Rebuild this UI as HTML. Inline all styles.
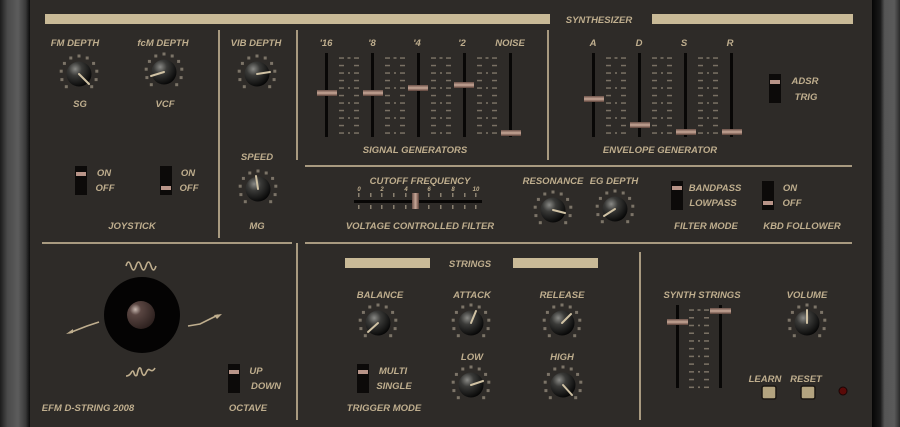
<!DOCTYPE html>
<html><head><meta charset="utf-8"><style>
html,body{margin:0;padding:0;background:#2e2b28;}
svg{display:block}
text{font-family:"Liberation Sans",sans-serif;font-style:italic;font-weight:bold;font-size:9.5px;fill:#bfae8e;text-anchor:middle}
</style></head><body>
<svg width="900" height="427" viewBox="0 0 900 427" xmlns="http://www.w3.org/2000/svg">
<defs>
<linearGradient id="side" x1="0" x2="1" y1="0" y2="0">
<stop offset="0" stop-color="#1c1c1c"/><stop offset="0.25" stop-color="#4a4a4a"/><stop offset="0.6" stop-color="#5c5c5c"/><stop offset="0.85" stop-color="#3a3a3a"/><stop offset="1" stop-color="#0a0a0a"/>
</linearGradient>
<linearGradient id="side2" x1="0" x2="1" y1="0" y2="0">
<stop offset="0" stop-color="#050505"/><stop offset="0.3" stop-color="#1a1a1a"/><stop offset="0.45" stop-color="#555"/><stop offset="0.8" stop-color="#5a5a5a"/><stop offset="1" stop-color="#2a2a2a"/>
</linearGradient>
<radialGradient id="kb" cx="0.35" cy="0.3" r="0.75">
<stop offset="0" stop-color="#8a8a86"/><stop offset="0.35" stop-color="#3a3a38"/><stop offset="1" stop-color="#050505"/>
</radialGradient>
<radialGradient id="joy" cx="0.3" cy="0.3" r="0.8">
<stop offset="0" stop-color="#c8b8b0"/><stop offset="0.25" stop-color="#5a4642"/><stop offset="1" stop-color="#2a1e1c"/>
</radialGradient>
<linearGradient id="cap" x1="0" x2="0" y1="0" y2="1">
<stop offset="0" stop-color="#6a5048"/><stop offset="0.5" stop-color="#c8a898"/><stop offset="1" stop-color="#5a4038"/>
</linearGradient>
<linearGradient id="caph" x1="0" x2="1" y1="0" y2="0">
<stop offset="0" stop-color="#6a5048"/><stop offset="0.5" stop-color="#c8a898"/><stop offset="1" stop-color="#5a4038"/>
</linearGradient>
<g id="kscale" fill="#7c7468">
<rect x="-14.2" y="11.2" width="3" height="3"/><rect x="-18.6" y="4.1" width="3" height="3"/><rect x="-19.3" y="-4.3" width="3" height="3"/><rect x="-16.1" y="-12.1" width="3" height="3"/><rect x="-9.7" y="-17.5" width="3" height="3"/><rect x="-1.5" y="-19.5" width="3" height="3"/><rect x="6.7" y="-17.5" width="3" height="3"/><rect x="13.1" y="-12.1" width="3" height="3"/><rect x="16.3" y="-4.3" width="3" height="3"/><rect x="15.6" y="4.1" width="3" height="3"/><rect x="11.2" y="11.2" width="3" height="3"/>
</g>
<g id="knob"><use href="#kscale"/><circle r="12.5" fill="url(#kb)"/></g>
<g id="vscale" fill="#7a7164">
<rect x="-10" y="-0.7" width="5" height="1.5"/><rect x="5" y="-0.7" width="5" height="1.5"/>
<rect x="-10" y="6.8" width="5" height="1.5"/><rect x="5" y="6.8" width="5" height="1.5"/>
<rect x="-10" y="14.3" width="5" height="1.5"/><rect x="5" y="14.3" width="5" height="1.5"/>
<rect x="-10" y="21.8" width="5" height="1.5"/><rect x="5" y="21.8" width="5" height="1.5"/>
<rect x="-10" y="29.3" width="5" height="1.5"/><rect x="5" y="29.3" width="5" height="1.5"/>
<rect x="-10" y="36.8" width="5" height="1.5"/><rect x="5" y="36.8" width="5" height="1.5"/>
<rect x="-10" y="44.3" width="5" height="1.5"/><rect x="5" y="44.3" width="5" height="1.5"/>
<rect x="-10" y="51.8" width="5" height="1.5"/><rect x="5" y="51.8" width="5" height="1.5"/>
<rect x="-10" y="59.3" width="5" height="1.5"/><rect x="5" y="59.3" width="5" height="1.5"/>
<rect x="-10" y="66.8" width="5" height="1.5"/><rect x="5" y="66.8" width="5" height="1.5"/>
<rect x="-10" y="74.3" width="5" height="1.5"/><rect x="5" y="74.3" width="5" height="1.5"/>
<rect x="-1.5" y="-0.8" width="3" height="1.6"/><rect x="-1" y="14.2" width="2" height="1.6"/><rect x="-1" y="29.2" width="2" height="1.6"/><rect x="-1" y="44.2" width="2" height="1.6"/><rect x="-1" y="59.2" width="2" height="1.6"/><rect x="-1" y="74.2" width="2" height="1.6"/>
</g>
</defs>

<rect width="900" height="427" fill="#2e2b28"/>
<rect x="0" y="0" width="30" height="427" fill="url(#side)"/>
<rect x="872" y="0" width="28" height="427" fill="url(#side2)"/>

<g fill="#c9ba97">
<rect x="45" y="14" width="505" height="10"/>
<rect x="652" y="14" width="201" height="10"/>
<rect x="345" y="258" width="85" height="10"/>
<rect x="513" y="258" width="85" height="10"/>
</g>
<text x="599" y="23">SYNTHESIZER</text>
<text x="470" y="267">STRINGS</text>

<g stroke="#a89a80" stroke-width="2">
<line x1="219" y1="30" x2="219" y2="238"/>
<line x1="297" y1="30" x2="297" y2="160"/>
<line x1="548" y1="30" x2="548" y2="160"/>
<line x1="305" y1="166" x2="852" y2="166"/>
<line x1="305" y1="243" x2="852" y2="243"/>
<line x1="42" y1="243" x2="292" y2="243"/>
<line x1="297" y1="243" x2="297" y2="420"/>
<line x1="640" y1="252" x2="640" y2="420"/>
</g>

<!-- switches -->
<g fill="#0c0a09">
<rect x="75" y="166" width="12" height="29"/>
<rect x="160" y="166" width="12" height="29"/>
<rect x="769" y="74" width="12" height="29"/>
<rect x="671" y="181" width="12" height="29"/>
<rect x="762" y="181" width="12" height="29"/>
<rect x="228" y="364" width="12" height="29"/>
<rect x="357" y="364" width="12" height="29"/>
</g>
<g fill="#b89488">
<rect x="76" y="172" width="10" height="4"/>
<rect x="161" y="186" width="10" height="4"/>
<rect x="770" y="80" width="10" height="4"/>
<rect x="672" y="186" width="10" height="4"/>
<rect x="763" y="201" width="10" height="4"/>
<rect x="229" y="370" width="10" height="4"/>
<rect x="358" y="370" width="10" height="4"/>
</g>

<!-- left top -->
<text x="75" y="46">FM DEPTH</text>
<text x="163" y="46">fcM DEPTH</text>
<text x="256" y="46">VIB DEPTH</text>
<text x="80" y="107">SG</text>
<text x="165" y="107">VCF</text>
<text x="257" y="160">SPEED</text>
<text x="257" y="229">MG</text>
<text x="132" y="229">JOYSTICK</text>
<g stroke="#d0c2a4" stroke-width="2" stroke-linecap="round">
<g transform="translate(79,74)"><use href="#knob" stroke="none"/><line x1="0" y1="0" x2="10" y2="10"/></g>
<g transform="translate(164,72)"><use href="#knob" stroke="none"/><line x1="0" y1="0" x2="-13" y2="4"/></g>
<g transform="translate(257,74)"><use href="#knob" stroke="none"/><line x1="0" y1="0" x2="13" y2="-2"/></g>
<g transform="translate(258,189)"><use href="#knob" stroke="none"/><line x1="0" y1="0" x2="-2" y2="-13"/></g>
</g>
<text x="104" y="176">ON</text><text x="105" y="191">OFF</text>
<text x="188" y="176">ON</text><text x="189" y="191">OFF</text>

<!-- signal generators -->
<text x="326" y="46">'16</text><text x="372" y="46">'8</text><text x="417" y="46">'4</text><text x="462" y="46">'2</text><text x="510" y="46">NOISE</text>
<g fill="#080706">
<rect x="325" y="53" width="3" height="84"/><rect x="371" y="53" width="3" height="84"/><rect x="417" y="53" width="3" height="84"/><rect x="463" y="53" width="3" height="84"/><rect x="509" y="53" width="3" height="84"/>
<rect x="592" y="53" width="3" height="84"/><rect x="638" y="53" width="3" height="84"/><rect x="684" y="53" width="3" height="84"/><rect x="730" y="53" width="3" height="84"/>
<rect x="676" y="305" width="3" height="83"/><rect x="719" y="305" width="3" height="83"/>
</g>
<use href="#vscale" x="349" y="58"/><use href="#vscale" x="395" y="58"/><use href="#vscale" x="441" y="58"/><use href="#vscale" x="487" y="58"/>
<use href="#vscale" x="616" y="58"/><use href="#vscale" x="662" y="58"/><use href="#vscale" x="708" y="58"/>
<g transform="translate(699,310) scale(1,1.03)"><use href="#vscale"/></g>
<g fill="url(#cap)">
<rect x="317" y="90" width="20" height="6"/><rect x="363" y="90" width="20" height="6"/><rect x="408" y="85" width="20" height="6"/><rect x="454" y="82" width="20" height="6"/><rect x="501" y="130" width="20" height="6"/>
<rect x="584" y="96" width="20" height="6"/><rect x="630" y="122" width="20" height="6"/><rect x="676" y="129" width="20" height="6"/><rect x="722" y="129" width="20" height="6"/>
<rect x="667" y="319" width="21" height="6"/><rect x="710" y="308" width="21" height="6"/>
</g>
<text x="415" y="153">SIGNAL GENERATORS</text>

<!-- envelope -->
<text x="593" y="46">A</text><text x="639" y="46">D</text><text x="684" y="46">S</text><text x="730" y="46">R</text>
<text x="660" y="153">ENVELOPE GENERATOR</text>
<text x="805" y="84">ADSR</text><text x="806" y="100">TRIG</text>

<!-- VCF -->
<text x="420" y="184">CUTOFF FREQUENCY</text>
<text x="359" y="191" style="font-size:6px">0</text><text x="382" y="191" style="font-size:6px">2</text><text x="406" y="191" style="font-size:6px">4</text><text x="429" y="191" style="font-size:6px">6</text><text x="453" y="191" style="font-size:6px">8</text><text x="476" y="191" style="font-size:6px">10</text>
<g fill="#8a8070">
<rect x="358" y="193" width="1.5" height="4"/><rect x="370" y="193" width="1.5" height="4"/><rect x="381" y="193" width="1.5" height="4"/><rect x="393" y="193" width="1.5" height="4"/><rect x="405" y="193" width="1.5" height="4"/><rect x="428" y="193" width="1.5" height="4"/><rect x="440" y="193" width="1.5" height="4"/><rect x="452" y="193" width="1.5" height="4"/><rect x="464" y="193" width="1.5" height="4"/><rect x="475" y="193" width="1.5" height="4"/>
<rect x="358" y="205" width="1.5" height="4"/><rect x="370" y="205" width="1.5" height="4"/><rect x="381" y="205" width="1.5" height="4"/><rect x="393" y="205" width="1.5" height="4"/><rect x="405" y="205" width="1.5" height="4"/><rect x="428" y="205" width="1.5" height="4"/><rect x="440" y="205" width="1.5" height="4"/><rect x="452" y="205" width="1.5" height="4"/><rect x="464" y="205" width="1.5" height="4"/><rect x="475" y="205" width="1.5" height="4"/>
</g>
<rect x="354" y="200" width="128" height="3" fill="#080706"/>
<rect x="412" y="193" width="7" height="16" fill="url(#caph)"/>
<text x="420" y="229">VOLTAGE CONTROLLED FILTER</text>
<text x="553" y="184">RESONANCE</text><text x="614" y="184">EG DEPTH</text>
<g stroke="#d0c2a4" stroke-width="2" stroke-linecap="round">
<g transform="translate(553,210)"><use href="#knob" stroke="none"/><line x1="0" y1="0" x2="12" y2="3"/></g>
<g transform="translate(615,209)"><use href="#knob" stroke="none"/><line x1="0" y1="0" x2="-11" y2="7"/></g>
</g>
<text x="715" y="191">BANDPASS</text><text x="713" y="206">LOWPASS</text>
<text x="706" y="229">FILTER MODE</text>
<text x="790" y="191">ON</text><text x="792" y="206">OFF</text>
<text x="802" y="229">KBD FOLLOWER</text>

<!-- joystick -->
<circle cx="142" cy="315" r="38" fill="#040303"/>
<circle cx="141" cy="315" r="14" fill="url(#joy)"/>
<g fill="none" stroke="#bfae8e" stroke-width="1.6">
<path d="M126 266 q2.5 -8 5 0 q2.5 8 5 0 q2.5 -8 5 0 q2.5 8 5 0 q2.5 -8 5 0 q2.5 8 5 0"/>
<path d="M126 376 q3 0 5 -3 q2 -4 3 0 q1 4 3 2 q2 -10 4 -6 q2 10 5 4 q2 -5 4 -3 q3 2 5 -2"/>
<path d="M99 322 l-12 4 l-18 7"/><path d="M188 326 l12 -2 l18 -9"/>
</g>
<path d="M66 334 l7 -5 l0 4 z" fill="#bfae8e"/><path d="M222 314 l-8 1 l3 4 z" fill="#bfae8e"/>
<text x="256" y="374">UP</text><text x="266" y="389">DOWN</text>
<text x="248" y="411">OCTAVE</text>
<text x="88" y="411">EFM D-STRING 2008</text>

<!-- strings -->
<text x="380" y="298">BALANCE</text><text x="472" y="298">ATTACK</text><text x="562" y="298">RELEASE</text>
<text x="472" y="360">LOW</text><text x="562" y="360">HIGH</text>
<g stroke="#d0c2a4" stroke-width="2" stroke-linecap="round">
<g transform="translate(378,323)"><use href="#knob" stroke="none"/><line x1="0" y1="0" x2="-10" y2="9"/></g>
<g transform="translate(471,323)"><use href="#knob" stroke="none"/><line x1="0" y1="0" x2="5" y2="-12"/></g>
<g transform="translate(562,323)"><use href="#knob" stroke="none"/><line x1="0" y1="0" x2="9" y2="-9"/></g>
<g transform="translate(471,385)"><use href="#knob" stroke="none"/><line x1="0" y1="0" x2="12" y2="-4"/></g>
<g transform="translate(563,385)"><use href="#knob" stroke="none"/><line x1="0" y1="0" x2="9" y2="10"/></g>
<g transform="translate(807,323)"><use href="#knob" stroke="none"/><line x1="0" y1="0" x2="0" y2="-13"/></g>
</g>
<text x="393" y="374">MULTI</text><text x="394" y="389">SINGLE</text>
<text x="384" y="411">TRIGGER MODE</text>

<!-- right -->
<text x="702" y="298">SYNTH  STRINGS</text>
<text x="807" y="298">VOLUME</text>
<text x="765" y="382">LEARN</text><text x="806" y="382">RESET</text>
<rect x="762" y="386" width="14" height="13" rx="2" fill="#b3a37f" stroke="#1a1612" stroke-width="1.5"/>
<rect x="801" y="386" width="14" height="13" rx="2" fill="#b3a37f" stroke="#1a1612" stroke-width="1.5"/>
<circle cx="843" cy="391" r="4" fill="#5a0a08" stroke="#1a0505"/>
</svg>
</body></html>
